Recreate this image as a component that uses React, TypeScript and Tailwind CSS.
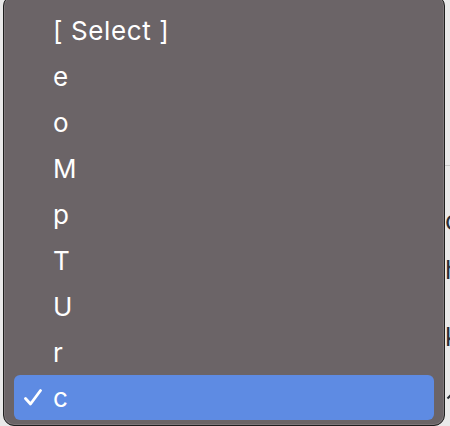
import React from "react";

const items = ["[ Select ]", "e", "o", "M", "p", "T", "U", "r", "c"];

function Check() {
  return (
    <svg width="18" height="17" viewBox="0 0 18 17" fill="none">
      <path
        d="M1.5 9.5 L6.5 15 L16.5 1.5"
        stroke="white"
        strokeWidth="2.8"
        strokeLinecap="round"
        strokeLinejoin="round"
      />
    </svg>
  );
}

export default function App() {
  return (
    <div
      className="flex w-[450px] h-[426px] overflow-hidden bg-[#e9e9e9]"
      style={{ fontFamily: "Inter, 'Noto Sans', sans-serif" }}
    >
      {/* left strip of the page behind */}
      <div className="w-[3px] shrink-0" />

      {/* menu */}
      <div className="w-[442px] h-[431px] -mt-[5px] shrink-0 rounded-[11px] border border-[#1e1e1e] bg-[#6b6467] shadow-[inset_0_0_0_1px_rgba(255,255,255,0.12)]">
        <div className="flex flex-col pt-[11px] px-[10px]">
          {items.map((t, i) => {
            const sel = i === items.length - 1;
            return (
              <div
                key={i}
                className={
                  "flex items-center text-[26px] tracking-[0.6px] text-white " +
                  (sel ? "h-[45px] rounded-[6px] bg-[#5e8be3] pl-[10px] gap-[11px]" : "h-[46px] pl-[39px]")
                }
              >
                {sel && <Check />}
                <span>{t}</span>
              </div>
            );
          })}
        </div>
      </div>

      {/* right strip of the page behind */}
      <div className="flex flex-col w-[20px] shrink-0 pt-[165px] text-[26px] leading-none text-[#2b2f36]">
        <div className="h-px w-full bg-[#c9c9c9]" />
        <div className="mt-[42px]">c</div>
        <div className="mt-[23px]">h</div>
        <div className="mt-[41px]">k</div>
        <div className="mt-[44px] ml-[1px] h-[2px] w-[10px] bg-[#2b2f36] -rotate-45" />
      </div>
    </div>
  );
}
